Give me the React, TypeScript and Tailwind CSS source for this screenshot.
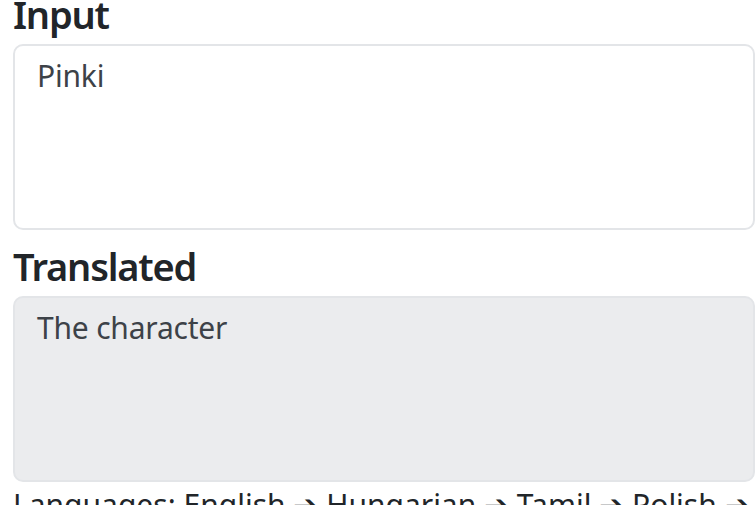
export default function App() {
  const font = { fontFamily: '"Noto Sans", Roboto, sans-serif' }

  return (
    <div className="min-h-screen bg-white overflow-hidden" style={font}>
      <div className="-mt-[8px] pl-[13px]">
        {/* Input */}
        <h2 className="text-[38px] leading-[45px] font-semibold tracking-[-1.2px] text-[#212529] mb-[7px]">Input</h2>
        <textarea
          defaultValue="Pinki"
          className="block w-[742px] h-[186px] resize-none rounded-[10px] border-2 border-[#e3e5e8] bg-white px-[22px] py-[7px] text-[30px] leading-[45px] tracking-[-0.2px] text-[#3d4248] outline-none"
        />

        {/* Translated */}
        <h2 className="text-[38px] leading-[45px] font-semibold tracking-[-1.2px] text-[#212529] mt-[14px] mb-[7px]">Translated</h2>
        <textarea
          readOnly
          defaultValue="The character"
          className="block w-[742px] h-[186px] resize-none rounded-[10px] border-2 border-[#e3e5e8] bg-[#ebecee] px-[22px] py-[7px] text-[30px] leading-[45px] tracking-[-0.2px] text-[#3d4248] outline-none"
        />

        <p className="text-[30px] leading-[45px] text-[#212529] whitespace-nowrap">
          Languages: English ➔ Hungarian ➔ Tamil ➔ Polish ➔ English
        </p>
      </div>
    </div>
  )
}
